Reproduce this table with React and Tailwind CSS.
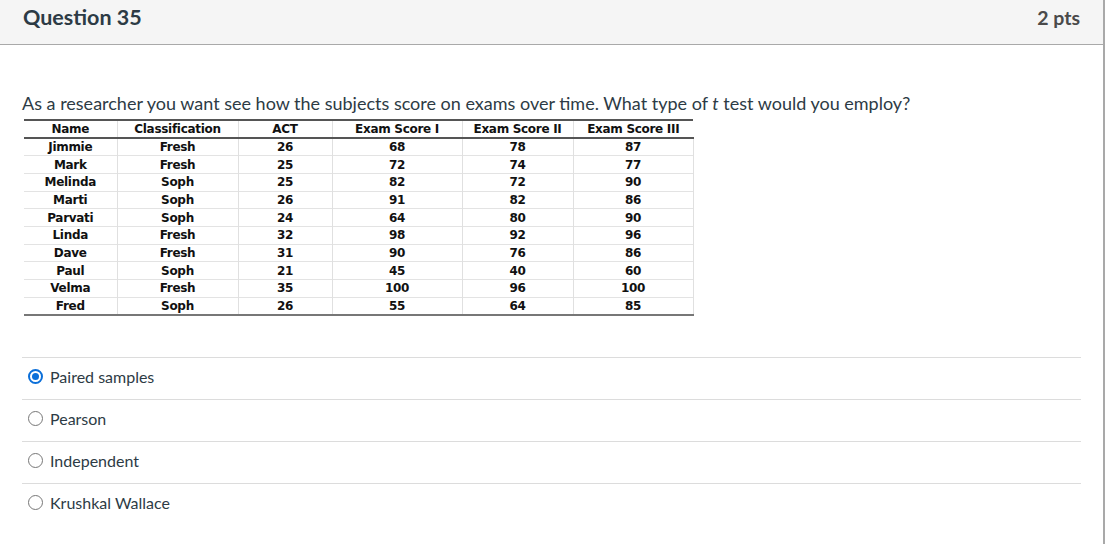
import React from "react";

const rows = [
  ["Jimmie", "Fresh", "26", "68", "78", "87"],
  ["Mark", "Fresh", "25", "72", "74", "77"],
  ["Melinda", "Soph", "25", "82", "72", "90"],
  ["Marti", "Soph", "26", "91", "82", "86"],
  ["Parvati", "Soph", "24", "64", "80", "90"],
  ["Linda", "Fresh", "32", "98", "92", "96"],
  ["Dave", "Fresh", "31", "90", "76", "86"],
  ["Paul", "Soph", "21", "45", "40", "60"],
  ["Velma", "Fresh", "35", "100", "96", "100"],
  ["Fred", "Soph", "26", "55", "64", "85"],
];

const headers = ["Name", "Classification", "ACT", "Exam Score I", "Exam Score II", "Exam Score III"];
const widths = ["w-[93px]", "w-[121px]", "w-[94px]", "w-[130px]", "w-[111px]", "w-[120px]"];

const answers = ["Paired samples", "Pearson", "Independent", "Krushkal Wallace"];

function Radio({ checked }) {
  if (checked) {
    return (
      <span className="w-[15px] h-[15px] rounded-full border-2 border-[#0b6fd9] flex items-center justify-center">
        <span className="w-[7px] h-[7px] rounded-full bg-[#0b6fd9]" />
      </span>
    );
  }
  return <span className="w-[15px] h-[15px] rounded-full border border-[#777]" />;
}

export default function App() {
  return (
    <div className="w-[1105px] h-[544px] bg-white border-r-2 border-[#a9a9a9] font-['Lato','Open_Sans',sans-serif] text-[#2d3b45]">
      {/* header */}
      <div className="h-[45px] bg-[#f5f5f5] border-b border-[#a9a9a9] flex items-start justify-between pl-[23px] pr-[23px] pt-[4px]">
        <h2 className="text-[21.5px] leading-[26px] font-bold text-[#2d3b45]">Question 35</h2>
        <span className="text-[19.5px] leading-[28px] font-bold text-[#4a4a4a]">2 pts</span>
      </div>

      <div className="pl-[22px] pr-[22px] pt-[47px]">
        <p className="text-[18px] leading-[22px]">
          As a researcher you want see how the subjects score on exams over time. What type of <i>t</i> test would you employ?
        </p>

        {/* table image */}
        <table className="mt-[5px] ml-[2px] border-collapse font-['DejaVu_Sans',Verdana,sans-serif] text-[12px] font-bold text-[#111] tracking-[-0.3px]">
          <thead>
            <tr className="h-[18px] border-t-2 border-b-2 border-[#555]">
              {headers.map((h, i) => (
                <th key={h} className={`${widths[i]} text-center font-bold border-r border-[#e0e0e0] last:border-r-0 p-0 leading-[16px]`}>
                  {h}
                </th>
              ))}
            </tr>
          </thead>
          <tbody className="border-b-2 border-[#777]">
            {rows.map((r) => (
              <tr key={r[0]} className="h-[17.7px] border-b border-[#e3e3e3]">
                {r.map((c, i) => (
                  <td key={i} className="text-center border-r border-[#e0e0e0] p-0 leading-[16px]">
                    {c}
                  </td>
                ))}
              </tr>
            ))}
          </tbody>
        </table>

        {/* answers */}
        <div className="mt-[41px]">
          {answers.map((a, i) => (
            <div key={a} className="h-[42px] border-t border-[#dcdcdc] flex items-center pl-[6px] pb-[3px] gap-[7px] text-[16px]">
              <Radio checked={i === 0} />
              <span>{a}</span>
            </div>
          ))}
        </div>
      </div>
    </div>
  );
}
